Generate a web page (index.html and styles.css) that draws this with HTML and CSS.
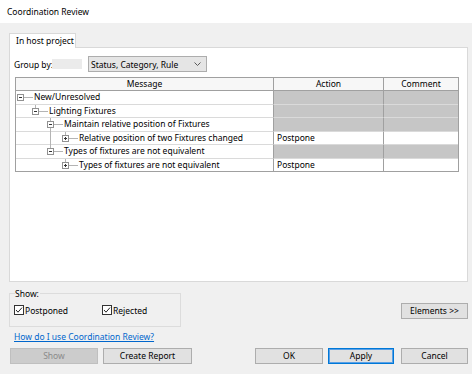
FILE: index.html
```html
<!DOCTYPE html>
<html>
<head>
<meta charset="utf-8">
<link rel="stylesheet" href="styles.css">
</head>
<body>
<div class="window">
  <div class="titlebar">Coordination Review</div>
  <div class="dialog">
    <div class="tabs"><div class="tab">In host project</div></div>
    <div class="panel">
      <div class="groupby">
        <span class="gb-label">Group by:</span>
        <span class="gb-blank"></span>
        <div class="select">
          <span>Status, Category, Rule</span>
          <svg class="chev" width="7" height="4" viewBox="0 0 7 4"><path d="M0.5 0.5 L3.5 3.5 L6.5 0.5" fill="none" stroke="#5a5a5a" stroke-width="1"/></svg>
        </div>
      </div>
      <div class="grid">
        <div class="hdr">Message</div>
        <div class="hdr col">Action</div>
        <div class="hdr col">Comment</div>

        <div class="cell msg">
          <svg class="tree" width="17" height="13" viewBox="0 0 17 13">
            <rect x="1.5" y="3.5" width="6" height="6" fill="#fff" stroke="#919191"/>
            <line x1="3" y1="6.5" x2="6" y2="6.5" stroke="#333"/>
            <line class="ln" x1="8" y1="6.5" x2="17" y2="6.5"/>
          </svg>
          <span>New/Unresolved</span>
        </div>
        <div class="cell col gray"></div>
        <div class="cell col gray"></div>

        <div class="cell msg">
          <svg class="tree" width="32" height="13" viewBox="0 0 32 13">
            <line class="ln" x1="19.5" y1="0" x2="19.5" y2="3"/>
            <rect x="16.5" y="3.5" width="6" height="6" fill="#fff" stroke="#919191"/>
            <line x1="18" y1="6.5" x2="21" y2="6.5" stroke="#333"/>
            <line class="ln" x1="23" y1="6.5" x2="32" y2="6.5"/>
          </svg>
          <span>Lighting Fixtures</span>
        </div>
        <div class="cell col gray"></div>
        <div class="cell col gray"></div>

        <div class="cell msg">
          <svg class="tree" width="47" height="13" viewBox="0 0 47 13">
            <line class="ln" x1="34.5" y1="0" x2="34.5" y2="3"/>
            <line class="ln" x1="34.5" y1="10" x2="34.5" y2="14"/>
            <rect x="31.5" y="3.5" width="6" height="6" fill="#fff" stroke="#919191"/>
            <line x1="33" y1="6.5" x2="36" y2="6.5" stroke="#333"/>
            <line class="ln" x1="38" y1="6.5" x2="47" y2="6.5"/>
          </svg>
          <span>Maintain relative position of Fixtures</span>
        </div>
        <div class="cell col gray"></div>
        <div class="cell col gray"></div>

        <div class="cell msg">
          <svg class="tree" width="62" height="13" viewBox="0 0 62 13">
            <line class="ln" x1="34.5" y1="0" x2="34.5" y2="14"/>
            <line class="ln" x1="49.5" y1="0" x2="49.5" y2="3"/>
            <rect x="46.5" y="3.5" width="6" height="6" fill="#fff" stroke="#919191"/>
            <line x1="48" y1="6.5" x2="51" y2="6.5" stroke="#333"/>
            <line x1="49.5" y1="5" x2="49.5" y2="8" stroke="#333"/>
            <line class="ln" x1="53" y1="6.5" x2="62" y2="6.5"/>
          </svg>
          <span>Relative position of two Fixtures changed</span>
        </div>
        <div class="cell col act">Postpone</div>
        <div class="cell col"></div>

        <div class="cell msg">
          <svg class="tree" width="47" height="13" viewBox="0 0 47 13">
            <line class="ln" x1="34.5" y1="0" x2="34.5" y2="3"/>
            <rect x="31.5" y="3.5" width="6" height="6" fill="#fff" stroke="#919191"/>
            <line x1="33" y1="6.5" x2="36" y2="6.5" stroke="#333"/>
            <line class="ln" x1="38" y1="6.5" x2="47" y2="6.5"/>
          </svg>
          <span>Types of fixtures are not equivalent</span>
        </div>
        <div class="cell col gray"></div>
        <div class="cell col gray"></div>

        <div class="cell msg end">
          <svg class="tree" width="62" height="13" viewBox="0 0 62 13">
            <line class="ln" x1="49.5" y1="0" x2="49.5" y2="3"/>
            <rect x="46.5" y="3.5" width="6" height="6" fill="#fff" stroke="#919191"/>
            <line x1="48" y1="6.5" x2="51" y2="6.5" stroke="#333"/>
            <line x1="49.5" y1="5" x2="49.5" y2="8" stroke="#333"/>
            <line class="ln" x1="53" y1="6.5" x2="62" y2="6.5"/>
          </svg>
          <span>Types of fixtures are not equivalent</span>
        </div>
        <div class="cell col act end">Postpone</div>
        <div class="cell col end"></div>
      </div>
    </div>

    <div class="mid">
      <div class="showbox">
        <div class="show-label">Show:</div>
        <div class="checks">
          <label class="chk first">
            <svg width="10" height="10" viewBox="0 0 10 10"><rect x="0.5" y="0.5" width="9" height="9" fill="#fff" stroke="#333"/><path d="M2 5 L4 7.2 L8 2.6" fill="none" stroke="#222" stroke-width="1"/></svg>
            <span>Postponed</span>
          </label>
          <label class="chk">
            <svg width="10" height="10" viewBox="0 0 10 10"><rect x="0.5" y="0.5" width="9" height="9" fill="#fff" stroke="#333"/><path d="M2 5 L4 7.2 L8 2.6" fill="none" stroke="#222" stroke-width="1"/></svg>
            <span>Rejected</span>
          </label>
        </div>
      </div>
      <div class="btn elements">Elements &gt;&gt;</div>
    </div>

    <a class="help" href="#">How do I use Coordination Review?</a>

    <div class="buttons">
      <div class="btn disabled b-show">Show</div>
      <div class="btn b-report">Create Report</div>
      <div class="spacer"></div>
      <div class="btn b-ok">OK</div>
      <div class="btn b-apply">Apply</div>
      <div class="btn b-cancel">Cancel</div>
    </div>
  </div>
</div>
</body>
</html>
```

FILE: styles.css
```css
* { box-sizing: border-box; }

body {
  margin: 0;
  background: #ffffff;
  font-family: "Noto Sans", "Open Sans", sans-serif;
  font-size: 8.5px;
  color: #000000;
  white-space: nowrap;
}

.window {
  width: 474px;
  height: 374px;
  display: flex;
  flex-direction: column;
}

.titlebar {
  height: 23px;
  line-height: 23px;
  padding-left: 7px;
  background: #ffffff;
}

.dialog {
  flex: 1;
  width: 472px;
  background: #f0f0f0;
  padding: 10px 4px 0 9px;
  display: flex;
  flex-direction: column;
}

.tabs {
  display: flex;
  height: 14px;
}

.tab {
  width: 67px;
  height: 15px;
  background: #ffffff;
  border: 1px solid #d9d9d9;
  border-bottom: none;
  padding-left: 6px;
  line-height: 13px;
  position: relative;
  z-index: 1;
}

.panel {
  height: 235px;
  width: 459px;
  background: #ffffff;
  border: 1px solid #d9d9d9;
  padding-left: 5px;
}

.groupby {
  display: flex;
  align-items: center;
  height: 16px;
  margin-top: 8px;
  margin-left: -1px;
}

.gb-label {
  width: 38px;
}

.gb-blank {
  width: 30px;
  height: 10px;
  background: #ebebeb;
}

.select {
  margin-left: 6px;
  width: 119px;
  height: 16px;
  background: #e5e5e5;
  border: 1px solid #adadad;
  display: flex;
  align-items: center;
  justify-content: space-between;
  padding: 0 5px 0 2px;
}

.chev { display: block; }

.grid {
  margin-top: 5px;
  width: 444px;
  display: grid;
  grid-template-columns: 257px 110px 75px;
  border: 1px solid #a0a0a0;
  border-bottom: none;
}

.hdr {
  height: 13px;
  line-height: 12px;
  text-align: center;
  background: #f7f7f7;
  border-bottom: 1px solid #a0a0a0;
}

.col { border-left: 1px solid #a0a0a0; }

.cell {
  height: 13.5px;
  line-height: 12.5px;
  border-bottom: 1px solid #dadada;
}

.cell.end { border-bottom-color: #a0a0a0; }

.gray { background: #c6c6c6; }

.act { padding-left: 3px; }

.msg {
  display: flex;
  align-items: flex-start;
}

.tree {
  display: block;
  flex: none;
  overflow: visible;
  margin-right: 1px;
}

.ln {
  stroke: #b4b4b4;
  stroke-width: 1;
}

.mid {
  display: flex;
  justify-content: space-between;
  align-items: center;
  margin-top: 11px;
}

.showbox {
  width: 172px;
  height: 34px;
  border: 1px solid #dcdcdc;
  padding-left: 4px;
}

.show-label {
  width: fit-content;
  margin-top: -5px;
  margin-left: 1px;
  line-height: 10px;
  background: #f0f0f0;
  padding: 0 1px 0 0;
}

.checks {
  display: flex;
  margin-top: 6px;
}

.chk {
  display: flex;
  align-items: center;
  gap: 1px;
  height: 10px;
}

.chk svg { display: block; }

.chk.first { width: 88px; }

.btn {
  height: 16px;
  line-height: 14px;
  text-align: center;
  background: #e1e1e1;
  border: 1px solid #adadad;
  color: #000000;
}

.elements {
  width: 67px;
  margin-top: 2px;
}

.help {
  margin-top: 4px;
  margin-left: 5px;
  line-height: 12px;
  color: #0066cc;
  text-decoration: underline;
  width: fit-content;
}

.buttons {
  display: flex;
  margin-top: 5px;
}

.spacer { flex: 1; }

.disabled {
  background: #cccccc;
  border-color: #bfbfbf;
  color: #8a8a8a;
}

.b-show { width: 88px; margin-left: 1px; }
.b-report { width: 89px; margin-left: 5px; }
.b-ok { width: 68px; }
.b-apply {
  width: 66px;
  margin-left: 5px;
  border-color: #0078d7;
  box-shadow: inset 0 0 0 1px #5aa0e6;
}
.b-cancel { width: 67px; margin-left: 7px; }
```
